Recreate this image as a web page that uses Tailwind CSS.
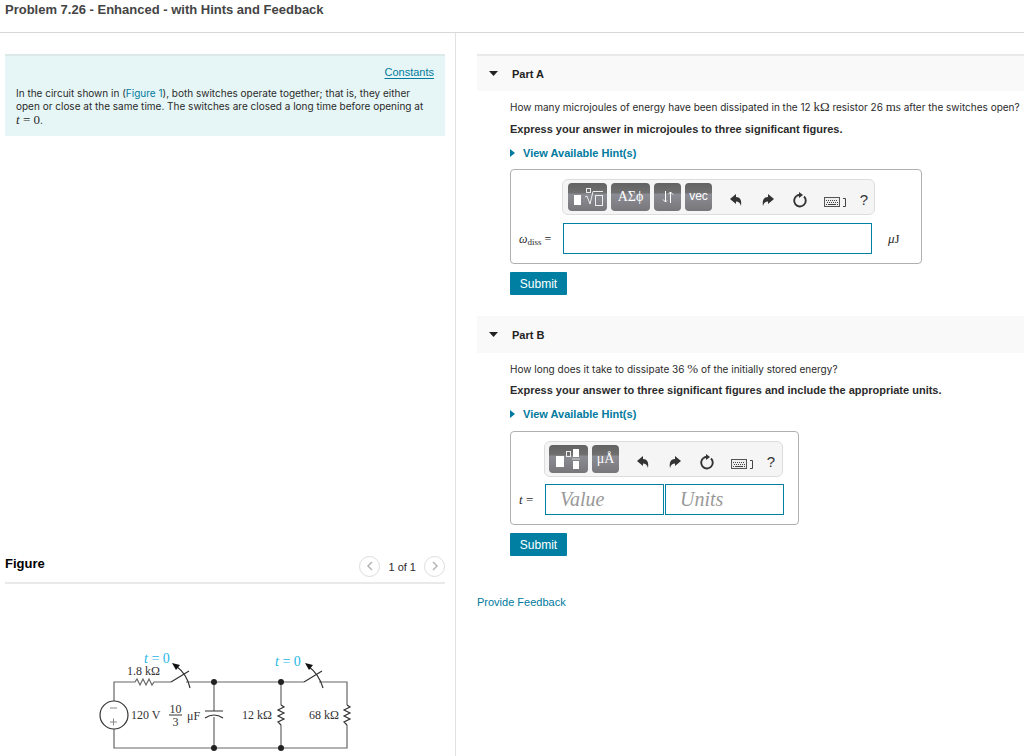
<!DOCTYPE html>
<html lang="en">
<head>
<meta charset="UTF-8">
<meta name="viewport" content="width=device-width, initial-scale=1.0">
<title>Problem 7.26 - Enhanced - with Hints and Feedback</title>
<script src="https://cdn.jsdelivr.net/npm/@tailwindcss/browser@4"></script>
</head>
<body class="flex min-h-screen flex-col bg-white font-['Liberation_Sans',Arial,sans-serif] text-[11px] leading-4 text-[#2b2b2b]">

<svg class="hidden">
  <symbol id="undo" viewBox="0 0 14 14"><path d="M1 6 L7 1 V4 C11 4 13 7 12 13 C11 9.500 9.500 8.500 7 8.500 V11 Z" fill="#333"/></symbol>
  <symbol id="redo" viewBox="0 0 14 14"><path d="M13 6 L7 1 V4 C3 4 1 7 2 13 C3 9.500 4.500 8.500 7 8.500 V11 Z" fill="#333"/></symbol>
  <symbol id="reset" viewBox="0 0 16 16"><path d="M4.500 4 A5.800 5.800 0 1 0 12 4.500" fill="none" stroke="#333" stroke-width="1.900"/><path d="M4.500 4 Q6 2.800 8 3" fill="none" stroke="#333" stroke-width="1.900"/><path d="M7 0 L11 3 L7 6 Z" fill="#333"/></symbol>
  <symbol id="keyboard" viewBox="0 0 24 12"><rect x="0.500" y="1.500" width="15" height="9" fill="#eee" stroke="#555"/><path d="M2 4.500 H14 M3 6.500 H14" stroke="#444" stroke-dasharray="1 1"/><path d="M2 8.500 H3 M4 8.500 H12 M13 8.500 H14" stroke="#444"/><path d="M19 2.500 H21.500 V10.500 H19" fill="none" stroke="#444"/></symbol>
</svg>

<header class="h-[33px] border-b border-[#d8d8d8] px-[5px] pt-0.5">
  <h1 class="text-[13px] leading-4 font-bold text-[#444]">Problem 7.26 - Enhanced - with Hints and Feedback</h1>
</header>

<div class="flex flex-1">
  <section class="flex w-[456px] shrink-0 flex-col border-r border-[#e2e2e2] pt-[21px] pr-2.5 pl-[5px]">
    <div class="border-t-2 border-[#dde8e8] bg-[#e6f6f6] px-[11px] pt-2 pb-[9px]">
      <p class="text-right"><a href="#constants" class="text-[#007a9e] underline underline-offset-2">Constants</a></p>
      <p class="mt-[7px] font-[Inter,'Liberation_Sans',sans-serif] text-[10px] leading-[13px] whitespace-nowrap">In the circuit shown in (<a href="#figure" class="text-[#007a9e]">Figure 1</a>), both switches operate together; that is, they either<br>open or close at the same time. The switches are closed a long time before opening at<br><span class="font-['Liberation_Serif',serif] text-[13px] leading-none"><i>t</i> = 0</span>.</p>
    </div>

    <div id="figure" class="mt-auto">
      <div class="flex h-[30px] justify-between border-b-2 border-[#e9e9e9]">
        <h2 class="pt-0.5 text-[13px] leading-4 font-bold text-black">Figure</h2>
        <div class="flex h-6 items-center gap-2">
          <button type="button" aria-label="Previous figure" class="flex size-[21px] items-center justify-center rounded-full border border-[#ddd]">
            <svg class="size-2.5" viewBox="0 0 10 10"><path d="M7 1 L3 5 L7 9" fill="none" stroke="#b5b5b5" stroke-width="1.500"/></svg>
          </button>
          <span class="pt-0.5">1 of 1</span>
          <button type="button" aria-label="Next figure" class="flex size-[21px] items-center justify-center rounded-full border border-[#ddd]">
            <svg class="size-2.5" viewBox="0 0 10 10"><path d="M3 1 L7 5 L3 9" fill="none" stroke="#b5b5b5" stroke-width="1.500"/></svg>
          </button>
        </div>
      </div>
      <svg class="mt-[65px] ml-[85px] block h-[107px] w-[270px]" viewBox="90 649 270 107" role="img" aria-label="Circuit" font-family="Liberation Serif, serif" font-size="12" fill="#333">
        <g fill="none" stroke="#666" stroke-width="1.200">
          <path d="M114 701 V682 H135 l2 -3 l3 6 l3 -6 l3 6 l3 -6 l3 6 l2 -3 H171 M186 682 H304 M319 682 H347 V705 M347 725 V748 H114 V729"/>
          <path d="M214 682 V711 M214 717 V748 M281 682 V705 M281 725 V748"/>
        </g>
        <g fill="none" stroke="#333" stroke-width="1.200">
          <circle cx="114" cy="715" r="14"/>
          <path d="M171 682 L189 671 M176 666 Q187 674 190 688 M304 682 L322 671 M308 666 Q319 674 323 688"/>
          <path d="M205 711 H223 M205 718 Q214 712 223 718"/>
          <path d="M281 705 l3 2 l-6 3 l6 3 l-6 3 l6 3 l-6 3 l3 3 M347 705 l3 2 l-6 3 l6 3 l-6 3 l6 3 l-6 3 l3 3"/>
          <path d="M169 715 H182" stroke-width="1"/>
          <path d="M110 708 H117 M110 722 H117 M113.500 718.500 V725.500" stroke="#888" stroke-width="1"/>
        </g>
        <path d="M172 663 L180 665 L176 670 Z M305 663 L313 665 L309 670 Z" fill="#111"/>
        <g fill="#222"><circle cx="214" cy="682" r="3"/><circle cx="214" cy="748" r="3"/><circle cx="281" cy="682" r="3"/><circle cx="281" cy="748" r="3"/></g>
        <g fill="#25b7e8" font-size="14"><text x="144" y="663"><tspan font-style="italic">t</tspan> = 0</text><text x="275" y="666"><tspan font-style="italic">t</tspan> = 0</text></g>
        <text x="127" y="675">1.8 kΩ</text>
        <text x="131" y="719">120 V</text>
        <text x="175.500" y="713" text-anchor="middle">10</text>
        <text x="175.500" y="726" text-anchor="middle">3</text>
        <text x="187" y="720">μF</text>
        <text x="242" y="719">12 kΩ</text>
        <text x="309" y="719">68 kΩ</text>
      </svg>
    </div>
  </section>

  <main class="min-w-0 flex-1 pt-[21px] pl-[21px]">
    <section>
      <h2 class="flex h-[37px] items-center gap-3.5 border-t-2 border-[#e9e9e9] bg-[#f9f9f9] pl-3 text-[11px] font-bold text-[#222]">
        <svg class="h-[5px] w-[9px]" viewBox="0 0 9 5"><path d="M0 0 H9 L4.500 5 Z" fill="#222"/></svg>Part A
      </h2>
      <div class="pt-2 pl-[33px]">
        <p class="font-[Inter,'Liberation_Sans',sans-serif] text-[10px] whitespace-nowrap">How many microjoules of energy have been dissipated in the 12 <span class="font-['Liberation_Serif',serif] text-[13px] leading-none">kΩ</span> resistor 26 <span class="font-['Liberation_Serif',serif] text-[13px] leading-none">ms</span> after the switches open?</p>
        <p class="mt-1.5 font-bold">Express your answer in microjoules to three significant figures.</p>
        <a href="#hints-a" class="mt-2 flex items-center gap-2 font-bold text-[#007a9e]"><svg class="h-2 w-[5px]" viewBox="0 0 5 8"><path d="M0 0 L5 4 L0 8 Z" fill="#007a9e"/></svg>View Available Hint(s)</a>
        <form class="mt-2">
          <div class="grid w-fit grid-cols-[43px_auto_46px] gap-y-2 rounded border border-[#b0b0b0] py-[9px] pl-2">
            <div class="col-start-2 flex h-9 w-[313px] items-center rounded-md border border-[#ddd] bg-[#f5f5f5] pl-[5px]">
              <div class="flex gap-1">
                <button type="button" aria-label="Templates" class="flex h-7 w-[39px] items-center justify-center rounded-sm bg-[linear-gradient(#626262_0,#707070_10px,#8c8c94_11px,#77777b_28px)]">
                  <svg class="h-5 w-8" viewBox="0 0 32 20"><path d="M2 8 H9 V18 H2 Z" fill="#fff"/><g fill="none" stroke="#eee"><rect x="14.500" y="1.500" width="4" height="4"/><path d="M13 10 L15 9 L18 17 L21 4.500 H31"/><rect x="23.500" y="8.500" width="7" height="10"/></g></svg>
                </button>
                <button type="button" class="h-7 w-[39px] rounded-sm bg-[linear-gradient(#626262_0,#707070_10px,#8c8c94_11px,#77777b_28px)] font-['Liberation_Serif',serif] text-[14px] text-white">ΑΣϕ</button>
                <button type="button" aria-label="Arrows" class="flex h-7 w-[27px] items-center justify-center rounded-sm bg-[linear-gradient(#626262_0,#707070_10px,#8c8c94_11px,#77777b_28px)]">
                  <svg class="h-3 w-3" viewBox="0 0 12 12" fill="none" stroke="#fff"><path d="M3.500 0 V11 M1 8.500 L3.500 11 L5 9.500 M8.500 12 V1 M6.500 3 L8.500 1 L11 3.500"/></svg>
                </button>
                <button type="button" class="h-7 w-[27px] rounded-sm bg-[linear-gradient(#626262_0,#707070_10px,#8c8c94_11px,#77777b_28px)] pb-0.5 text-[12px] text-white">vec</button>
              </div>
              <div class="ml-2 flex items-center pt-1.5">
                <button type="button" aria-label="Undo" class="flex w-8 justify-center"><svg class="size-3.5"><use href="#undo"/></svg></button>
                <button type="button" aria-label="Redo" class="flex w-8 justify-center"><svg class="size-3.5"><use href="#redo"/></svg></button>
                <button type="button" aria-label="Reset" class="flex w-8 justify-center"><svg class="size-4"><use href="#reset"/></svg></button>
                <button type="button" aria-label="Keyboard" class="flex w-10 justify-center pt-1"><svg class="h-3 w-6"><use href="#keyboard"/></svg></button>
                <button type="button" aria-label="Help" class="w-4 text-[15px] leading-4 text-[#333]">?</button>
              </div>
            </div>
            <label for="energy" class="col-start-1 self-center font-['Liberation_Serif',serif] text-[12px] whitespace-nowrap"><i>ω</i><sub class="text-[9px]">diss</sub> =</label>
            <input id="energy" type="text" class="ml-px h-[31px] w-[309px] border border-[#007fa3] bg-white px-2">
            <span class="self-center pl-[13px] font-['Liberation_Serif',serif] text-[13px]"><i>μ</i>J</span>
          </div>
          <button type="submit" class="mt-2 block h-[23px] w-[57px] rounded-[1px] bg-[#007fa3] text-[12px] text-white">Submit</button>
        </form>
      </div>
    </section>

    <section class="mt-[21px]">
      <h2 class="flex h-[37px] items-center gap-3.5 bg-[#f9f9f9] pl-3 text-[11px] font-bold text-[#222]">
        <svg class="h-[5px] w-[9px]" viewBox="0 0 9 5"><path d="M0 0 H9 L4.500 5 Z" fill="#222"/></svg>Part B
      </h2>
      <div class="pt-2 pl-[33px]">
        <p class="font-[Inter,'Liberation_Sans',sans-serif] text-[10px] whitespace-nowrap">How long does it take to dissipate 36 <span class="font-['Liberation_Serif',serif] text-[13px] leading-none">%</span> of the initially stored energy?</p>
        <p class="mt-[5px] font-bold">Express your answer to three significant figures and include the appropriate units.</p>
        <a href="#hints-b" class="mt-2 flex items-center gap-2 font-bold text-[#007a9e]"><svg class="h-2 w-[5px]" viewBox="0 0 5 8"><path d="M0 0 L5 4 L0 8 Z" fill="#007a9e"/></svg>View Available Hint(s)</a>
        <form class="mt-[9px]">
          <div class="grid w-fit grid-cols-[25px_auto] gap-y-[7px] rounded border border-[#b0b0b0] py-[9px] pr-3.5 pl-2">
            <div class="col-start-2 flex h-9 w-[239px] items-center rounded-md border border-[#ddd] bg-[#f5f5f5] pl-1">
              <div class="flex gap-1">
                <button type="button" aria-label="Templates" class="flex h-7 w-[39px] items-center justify-center rounded-sm bg-[linear-gradient(#626262_0,#707070_10px,#8c8c94_11px,#77777b_28px)]">
                  <svg class="h-[22px] w-7" viewBox="0 0 28 22"><path d="M1 8 H9 V19 H1 Z M18 1 H24 V9 H18 Z M18 13 H24 V21 H18 Z" fill="#fff"/><path d="M17 11 H25" stroke="#bbb" stroke-width="1.500"/><rect x="11.500" y="3.500" width="4" height="5" fill="none" stroke="#eee"/></svg>
                </button>
                <button type="button" class="h-7 w-[27px] rounded-sm bg-[linear-gradient(#626262_0,#707070_10px,#8c8c94_11px,#77777b_28px)] font-['Liberation_Serif',serif] text-[14px] text-white">μÅ</button>
              </div>
              <div class="ml-2 flex items-center pt-1.5">
                <button type="button" aria-label="Undo" class="flex w-8 justify-center"><svg class="size-3.5"><use href="#undo"/></svg></button>
                <button type="button" aria-label="Redo" class="flex w-8 justify-center"><svg class="size-3.5"><use href="#redo"/></svg></button>
                <button type="button" aria-label="Reset" class="flex w-8 justify-center"><svg class="size-4"><use href="#reset"/></svg></button>
                <button type="button" aria-label="Keyboard" class="flex w-10 justify-center pt-1"><svg class="h-3 w-6"><use href="#keyboard"/></svg></button>
                <button type="button" aria-label="Help" class="w-4 text-[15px] leading-4 text-[#333]">?</button>
              </div>
            </div>
            <label for="value" class="col-start-1 self-center font-['Liberation_Serif',serif] text-[13px]"><i>t</i> =</label>
            <div class="ml-px flex gap-px">
              <input id="value" type="text" placeholder="Value" class="h-[31px] w-[119px] border border-[#007fa3] bg-white px-3.5 font-['Liberation_Serif',serif] text-[20px] italic placeholder:text-[#999]">
              <input id="units" type="text" aria-label="Units" placeholder="Units" class="h-[31px] w-[119px] border border-[#007fa3] bg-white px-3.5 font-['Liberation_Serif',serif] text-[20px] italic placeholder:text-[#999]">
            </div>
          </div>
          <button type="submit" class="mt-2 block h-[23px] w-[57px] rounded-[1px] bg-[#007fa3] text-[12px] text-white">Submit</button>
        </form>
      </div>
    </section>

    <a href="#feedback" class="mt-[38px] block w-fit text-[#007a9e]">Provide Feedback</a>
  </main>
</div>
</body>
</html>
